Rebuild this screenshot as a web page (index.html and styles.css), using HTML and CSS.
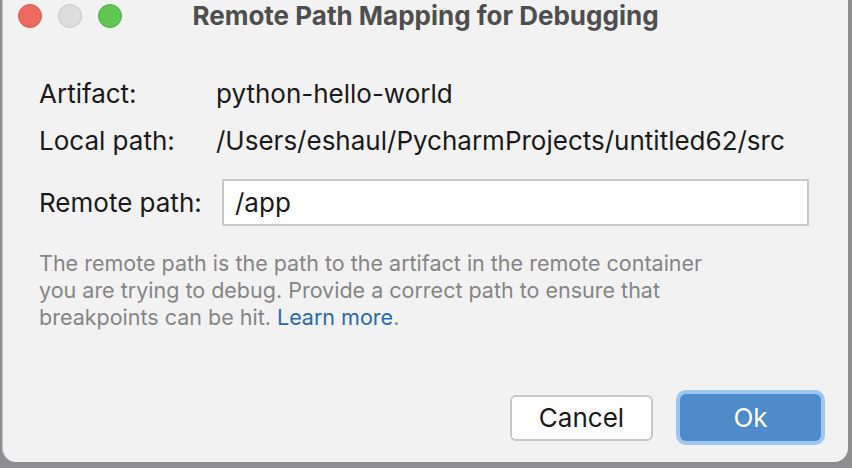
FILE: index.html
```html
<!DOCTYPE html>
<html lang="en">
<head>
  <meta charset="UTF-8">
  <title>Remote Path Mapping for Debugging</title>
  <link rel="stylesheet" href="styles.css">
</head>
<body>
  <div class="window">
    <!-- Title bar -->
    <div class="titlebar">
      <div class="lights">
        <span class="light close"></span>
        <span class="light min"></span>
        <span class="light max"></span>
      </div>
      <div class="title">Remote Path Mapping for Debugging</div>
      <div></div>
    </div>

    <!-- Form -->
    <div class="content">
      <div class="info">
        <div class="label">Artifact:</div>
        <div class="value">python-hello-world</div>
        <div class="label">Local path:</div>
        <div class="value">/Users/eshaul/PycharmProjects/untitled62/src</div>
      </div>

      <div class="remote-row">
        <label class="label" for="remotePath">Remote path:</label>
        <input id="remotePath" type="text" value="/app">
      </div>

      <p class="help">
        The remote path is the path to the artifact in the remote container<br>
        you are trying to debug. Provide a correct path to ensure that<br>
        breakpoints can be hit. <a href="#">Learn more</a>.
      </p>
    </div>

    <div class="buttons">
      <button class="btn cancel">Cancel</button>
      <button class="btn ok">Ok</button>
    </div>
  </div>
</body>
</html>
```

FILE: styles.css
```css
body {
  margin: 0;
  padding: 0;
  background: #8e8e90;
  font-family: Inter, "Liberation Sans", sans-serif;
  overflow: hidden;
}

.window {
  margin-left: 2px;
  width: 846px;
  height: 462px;
  background: #f2f2f2;
  border-left: 1px solid #c6c6c6;
  border-radius: 0 0 14px 14px;
  display: flex;
  flex-direction: column;
  box-sizing: border-box;
}

.titlebar {
  height: 32px;
  display: grid;
  grid-template-columns: 1fr auto 1fr;
  align-items: center;
}

.lights {
  display: flex;
  gap: 16px;
  padding-left: 15px;
}

.light {
  width: 24px;
  height: 24px;
  border-radius: 50%;
  box-sizing: border-box;
}

.light.close {
  background: #ee6a5f;
  border: 1px solid #d75a4f;
}

.light.min {
  background: #dddddd;
  border: 1px solid #c8c8c8;
}

.light.max {
  background: #5fc553;
  border: 1px solid #50ad45;
}

.title {
  font-size: 26px;
  font-weight: 700;
  color: #4e4e4e;
  margin-top: -1px;
}

.content {
  padding: 0 0 0 36px;
  color: #1a1a1a;
}

.info {
  display: grid;
  grid-template-columns: 177px 1fr;
  grid-auto-rows: 47px;
  align-items: center;
  margin-top: 38px;
  font-size: 26px;
}

.remote-row {
  display: flex;
  align-items: center;
  margin-top: 15px;
  font-size: 26px;
}

.remote-row .label {
  width: 183px;
}

.remote-row input {
  width: 587px;
  height: 47px;
  box-sizing: border-box;
  border: 2px solid #c9c9c9;
  background: #fff;
  padding: 0 11px;
  font-family: inherit;
  font-size: 26px;
  color: #1a1a1a;
  outline: none;
}

.help {
  margin: 24px 0 0;
  font-size: 21.5px;
  line-height: 27px;
  color: #858585;
}

.help a {
  color: #2a6ab3;
  text-decoration: none;
}

.buttons {
  margin-top: auto;
  display: flex;
  justify-content: flex-end;
  align-items: center;
  gap: 27px;
  padding: 0 27px 21px 0;
}

.btn {
  font-family: inherit;
  font-size: 26px;
  cursor: pointer;
  border-radius: 6px;
  box-sizing: border-box;
}

.btn.cancel {
  width: 143px;
  height: 46px;
  background: #fff;
  color: #1a1a1a;
  border: 2px solid #c8c8c8;
}

.btn.ok {
  width: 141px;
  height: 47px;
  background: #4f8bca;
  color: #fff;
  border: none;
  box-shadow: 0 0 0 4px #9dc6f2;
}
```
